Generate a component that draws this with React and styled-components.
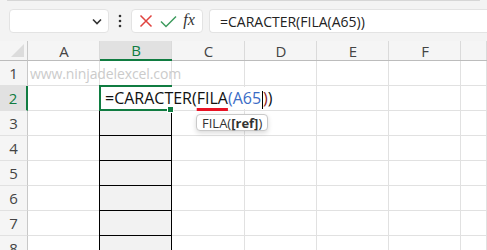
import React from 'react'
import styled, { createGlobalStyle } from 'styled-components'

const GREEN = '#107c41'

const Global = createGlobalStyle`
  html, body { margin: 0; padding: 0; background: #f3f3f3; overflow: hidden; }
  body { font-family: "Open Sans", "Noto Sans", sans-serif; }
`

const Page = styled.div`
  width: 487px;
  height: 250px;
  display: flex;
  flex-direction: column;
  overflow: hidden;
`

const RibbonEdge = styled.div`
  height: 3px;
  margin: 0 7px;
  background: #fff;
  border: 1px solid #d6d6d6;
  border-top: none;
  border-radius: 0 0 6px 6px;
  box-sizing: border-box;
`

const FormulaBar = styled.div`
  display: flex;
  align-items: center;
  height: 24px;
  margin: 8px 0 8px 9px;
`

const Box = styled.div`
  background: #fff;
  height: 24px;
  box-sizing: border-box;
  border: 1px solid #e3e3e3;
  border-radius: ${({ $open }) => ($open ? '4px 0 0 4px' : '4px')};
  display: flex;
  align-items: center;
`

const NameBox = styled(Box)`
  width: 100px;
  justify-content: flex-end;
  padding-right: 6px;
`

const Dots = styled.div`
  width: 22px;
  display: flex;
  justify-content: center;
`

const FxBox = styled(Box)`
  width: 72px;
  justify-content: space-around;
  padding: 0 4px;
`

const Fx = styled.span`
  font-family: "Liberation Serif", "DejaVu Serif", serif;
  font-style: italic;
  font-size: 16px;
  color: #333;
  margin-top: -2px;
`

const FormulaInput = styled(Box)`
  flex: 1;
  margin-left: 6px;
  border-right: none;
  padding-left: 10px;
  font-size: 14px;
  color: #222;
`

const Grid = styled.div`
  display: grid;
  grid-template-columns: 28px 72px 72px 73px 72px 72px 72px 1fr;
  grid-template-rows: 20px repeat(8, 25px);
  background: #fff;
  flex: 1;
`

const Corner = styled.div`
  background: #f5f5f5;
  border-right: 1px solid #c8c8c8;
  border-bottom: 1px solid #bcbcbc;
  position: relative;
  &::after {
    content: '';
    position: absolute;
    right: 3px;
    bottom: 3px;
    border-style: solid;
    border-width: 0 0 13px 13px;
    border-color: transparent transparent #dcdcdc transparent;
  }
`

const ColHead = styled.div`
  background: ${({ $active }) => ($active ? '#e1e1e1' : '#f5f5f5')};
  color: ${({ $active }) => ($active ? GREEN : '#444')};
  border-bottom: ${({ $active }) => ($active ? `2px solid ${GREEN}` : '1px solid #bcbcbc')};
  box-shadow: inset -1px 0 0 #dadada;
  font-size: 15px;
  display: flex;
  align-items: center;
  justify-content: center;
  box-sizing: border-box;
`

const RowHead = styled.div`
  background: ${({ $active }) => ($active ? '#e1e1e1' : '#f5f5f5')};
  color: ${({ $active }) => ($active ? GREEN : '#444')};
  border-right: ${({ $active }) => ($active ? `2px solid ${GREEN}` : '1px solid #c8c8c8')};
  border-bottom: 1px solid #e1e1e1;
  font-size: 15px;
  display: flex;
  align-items: center;
  justify-content: center;
  box-sizing: border-box;
`

const Cell = styled.div`
  position: relative;
  box-sizing: border-box;
  border-right: 1px solid #e1e1e1;
  border-bottom: 1px solid #e1e1e1;
  background: ${({ $filled }) => ($filled ? '#f2f2f2' : '#fff')};
  ${({ $boxed }) =>
    $boxed &&
    `
    border: 1px solid #000;
    border-top: none;
    margin-left: -1px;
  `}
`

const Selected = styled(Cell)`
  border: 2px solid ${GREEN};
  margin: -1px 0 0 -1px;
  z-index: 2;
  overflow: visible;
  white-space: nowrap;
  display: flex;
  align-items: center;
  padding-left: 4px;
  font-size: 16px;
  color: #111;
  &::after {
    content: '';
    position: absolute;
    right: -4px;
    bottom: -4px;
    width: 5px;
    height: 5px;
    background: ${GREEN};
    border: 1px solid #fff;
  }
`

const EditText = styled.span`
  background: #fff;
  padding-right: 2px;
`

const Watermark = styled.span`
  position: absolute;
  left: 2px;
  top: 3px;
  font-size: 14px;
  letter-spacing: -0.1px;
  color: #cbcbcb;
  white-space: nowrap;
  z-index: 1;
`

const Func = styled.span`
  text-decoration: underline;
  text-decoration-color: #e81123;
  text-decoration-thickness: 2.5px;
  text-underline-offset: 4px;
`

const Ref = styled.span`
  color: #3a6cc6;
`

const Caret = styled.span`
  display: inline-block;
  width: 1px;
  height: 18px;
  background: #000;
  vertical-align: middle;
  margin: 0 0 0 1px;
`

const Paren = styled.span`
  color: ${({ $c }) => $c || '#111'};
`

const Tip = styled.div`
  position: absolute;
  left: 95px;
  top: 27px;
  background: #fff;
  border: 1px solid #c9c9c9;
  border-radius: 4px;
  box-shadow: 0 2px 5px rgba(0, 0, 0, 0.15);
  padding: 0 5px;
  height: 17px;
  line-height: 16px;
  font-size: 13px;
  color: #333;
  box-sizing: border-box;
  b { font-weight: 700; }
`

const Chevron = () => (
  <svg width="10" height="7" viewBox="0 0 10 7">
    <path d="M1 1.5 L5 5.5 L9 1.5" fill="none" stroke="#333" strokeWidth="1.6" />
  </svg>
)

const VDots = () => (
  <svg width="4" height="14" viewBox="0 0 4 14">
    <circle cx="2" cy="2" r="1.3" fill="#333" />
    <circle cx="2" cy="7" r="1.3" fill="#333" />
    <circle cx="2" cy="12" r="1.3" fill="#333" />
  </svg>
)

const Cross = () => (
  <svg width="14" height="14" viewBox="0 0 14 14">
    <path d="M1.5 1.5 L12.5 12.5 M12.5 1.5 L1.5 12.5" stroke="#e0433f" strokeWidth="1.5" />
  </svg>
)

const Check = () => (
  <svg width="17" height="13" viewBox="0 0 17 13">
    <path d="M1 6.5 L6 11.5 L16 1.5" fill="none" stroke="#3d9b5d" strokeWidth="1.5" />
  </svg>
)

const cols = ['A', 'B', 'C', 'D', 'E', 'F', '']

export default function App() {
  const rows = [1, 2, 3, 4, 5, 6, 7, 8]
  return (
    <Page>
      <Global />
      <RibbonEdge />
      <FormulaBar>
        <NameBox><Chevron /></NameBox>
        <Dots><VDots /></Dots>
        <FxBox>
          <Cross />
          <Check />
          <Fx>fx</Fx>
        </FxBox>
        <FormulaInput $open>=CARACTER(FILA(A65))</FormulaInput>
      </FormulaBar>
      <Grid>
        <Corner />
        {cols.map((c, i) => (
          <ColHead key={i} $active={c === 'B'}>{c}</ColHead>
        ))}
        {rows.map((r) => (
          <React.Fragment key={r}>
            <RowHead $active={r === 2}>{r}</RowHead>
            {cols.map((c, i) => {
              if (r === 2 && c === 'B') {
                return (
                  <Selected key={i}>
                    <EditText>
                      =CARACTER(<Func>FILA</Func>
                      <Ref>(A65</Ref>
                      <Caret />
                      <Paren $c="#8c1d1d">)</Paren>)
                    </EditText>
                    <Tip>FILA(<b>[ref]</b>)</Tip>
                  </Selected>
                )
              }
              const boxed = c === 'B' && r > 2
              return (
                <Cell key={i} $filled={boxed} $boxed={boxed}>
                  {r === 1 && c === 'A' && <Watermark>www.ninjadelexcel.com</Watermark>}
                </Cell>
              )
            })}
          </React.Fragment>
        ))}
      </Grid>
    </Page>
  )
}
